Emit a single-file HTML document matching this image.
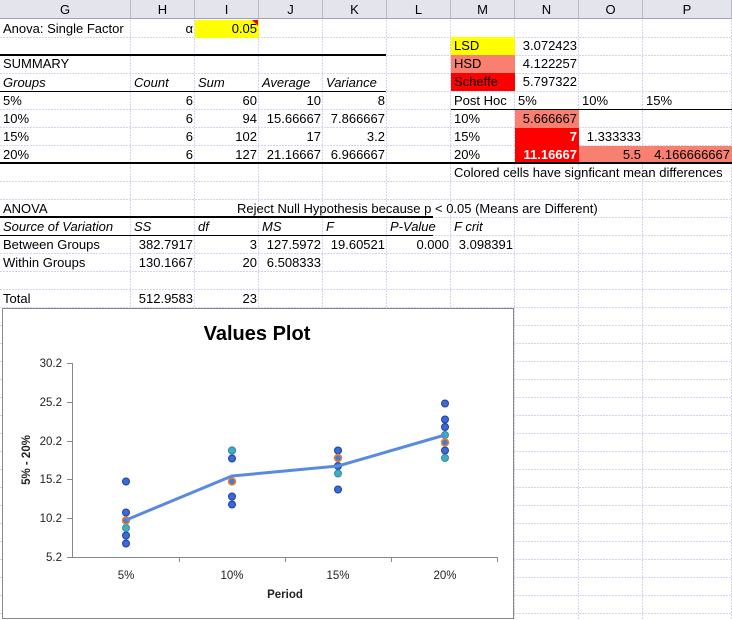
<!DOCTYPE html>
<html><head><meta charset="utf-8"><style>
body{margin:0;width:732px;height:620px;overflow:hidden;background:#fff;font-family:"Liberation Sans",Arial,sans-serif;font-size:13px;position:relative}
.h{position:absolute;top:0;height:19px;line-height:20px;text-align:center;font-size:13px;background:#e4e4ec;border-right:1px solid #b8b8cc;border-bottom:1px solid #a0a0b8;box-sizing:border-box}
.c{position:absolute;height:18px;line-height:18px;white-space:nowrap;padding:0 2px 0 3px;box-sizing:border-box}
.r{text-align:right}
.i{font-style:italic}
.ln{position:absolute;background:#000}
</style></head><body>
<svg style="position:absolute;left:0;top:0" width="732" height="620">
<g stroke="#d4d4ee" stroke-width="1" stroke-dasharray="2,1">
<line x1="130.5" y1="20" x2="130.5" y2="620"/><line x1="194.5" y1="20" x2="194.5" y2="620"/><line x1="258.5" y1="20" x2="258.5" y2="620"/><line x1="322.5" y1="20" x2="322.5" y2="620"/><line x1="386.5" y1="20" x2="386.5" y2="620"/><line x1="450.5" y1="20" x2="450.5" y2="620"/><line x1="514.5" y1="20" x2="514.5" y2="620"/><line x1="578.5" y1="20" x2="578.5" y2="620"/><line x1="642.5" y1="20" x2="642.5" y2="620"/><line x1="731.5" y1="20" x2="731.5" y2="620"/>
<line x1="0" y1="37.5" x2="732" y2="37.5"/><line x1="0" y1="55.5" x2="732" y2="55.5"/><line x1="0" y1="73.5" x2="732" y2="73.5"/><line x1="0" y1="91.5" x2="732" y2="91.5"/><line x1="0" y1="109.5" x2="732" y2="109.5"/><line x1="0" y1="127.5" x2="732" y2="127.5"/><line x1="0" y1="145.5" x2="732" y2="145.5"/><line x1="0" y1="163.5" x2="732" y2="163.5"/><line x1="0" y1="181.5" x2="732" y2="181.5"/><line x1="0" y1="199.5" x2="732" y2="199.5"/><line x1="0" y1="217.5" x2="732" y2="217.5"/><line x1="0" y1="235.5" x2="732" y2="235.5"/><line x1="0" y1="253.5" x2="732" y2="253.5"/><line x1="0" y1="271.5" x2="732" y2="271.5"/><line x1="0" y1="289.5" x2="732" y2="289.5"/><line x1="0" y1="307.5" x2="732" y2="307.5"/><line x1="0" y1="325.5" x2="732" y2="325.5"/><line x1="0" y1="343.5" x2="732" y2="343.5"/><line x1="0" y1="361.5" x2="732" y2="361.5"/><line x1="0" y1="379.5" x2="732" y2="379.5"/><line x1="0" y1="397.5" x2="732" y2="397.5"/><line x1="0" y1="415.5" x2="732" y2="415.5"/><line x1="0" y1="433.5" x2="732" y2="433.5"/><line x1="0" y1="451.5" x2="732" y2="451.5"/><line x1="0" y1="469.5" x2="732" y2="469.5"/><line x1="0" y1="487.5" x2="732" y2="487.5"/><line x1="0" y1="505.5" x2="732" y2="505.5"/><line x1="0" y1="523.5" x2="732" y2="523.5"/><line x1="0" y1="541.5" x2="732" y2="541.5"/><line x1="0" y1="559.5" x2="732" y2="559.5"/><line x1="0" y1="577.5" x2="732" y2="577.5"/><line x1="0" y1="595.5" x2="732" y2="595.5"/><line x1="0" y1="613.5" x2="732" y2="613.5"/>
</g></svg>
<div class="h" style="left:0;width:131px">G</div><div class="h" style="left:131px;width:64px">H</div><div class="h" style="left:195px;width:64px">I</div><div class="h" style="left:259px;width:64px">J</div><div class="h" style="left:323px;width:64px">K</div><div class="h" style="left:387px;width:64px">L</div><div class="h" style="left:451px;width:64px">M</div><div class="h" style="left:515px;width:64px">N</div><div class="h" style="left:579px;width:64px">O</div><div class="h" style="left:643px;width:89px">P</div>

<div class="c" style="left:0;top:20px">Anova: Single Factor</div>
<div class="c r" style="left:131px;top:20px;width:64px">α</div>
<div class="c r" style="left:195px;top:20px;width:64px;background:#ff0">0.05</div>
<div style="position:absolute;left:252px;top:20px;width:0;height:0;border-left:6px solid transparent;border-top:6px solid #e00"></div>

<div class="c" style="left:451px;top:37px;width:64px;background:#ff0">LSD</div><div class="c r" style="left:515px;top:37px;width:64px">3.072423</div>
<div class="c" style="left:451px;top:55px;width:64px;background:#f88070">HSD</div><div class="c r" style="left:515px;top:55px;width:64px">4.122257</div>
<div class="c" style="left:451px;top:73px;width:64px;background:#f00">Scheffe</div><div class="c r" style="left:515px;top:73px;width:64px">5.797322</div>

<div class="c" style="left:0;top:55px">SUMMARY</div>
<div class="c i" style="left:0;top:74px">Groups</div><div class="c i" style="left:131px;top:74px">Count</div><div class="c i" style="left:195px;top:74px">Sum</div><div class="c i" style="left:259px;top:74px">Average</div><div class="c i" style="left:323px;top:74px">Variance</div>
<div class="c" style="left:0;top:92px">5%</div><div class="c r" style="left:131px;top:92px;width:64px">6</div><div class="c r" style="left:195px;top:92px;width:64px">60</div><div class="c r" style="left:259px;top:92px;width:64px">10</div><div class="c r" style="left:323px;top:92px;width:64px">8</div>
<div class="c" style="left:0;top:110px">10%</div><div class="c r" style="left:131px;top:110px;width:64px">6</div><div class="c r" style="left:195px;top:110px;width:64px">94</div><div class="c r" style="left:259px;top:110px;width:64px">15.66667</div><div class="c r" style="left:323px;top:110px;width:64px">7.866667</div>
<div class="c" style="left:0;top:128px">15%</div><div class="c r" style="left:131px;top:128px;width:64px">6</div><div class="c r" style="left:195px;top:128px;width:64px">102</div><div class="c r" style="left:259px;top:128px;width:64px">17</div><div class="c r" style="left:323px;top:128px;width:64px">3.2</div>
<div class="c" style="left:0;top:146px">20%</div><div class="c r" style="left:131px;top:146px;width:64px">6</div><div class="c r" style="left:195px;top:146px;width:64px">127</div><div class="c r" style="left:259px;top:146px;width:64px">21.16667</div><div class="c r" style="left:323px;top:146px;width:64px">6.966667</div>

<div class="c" style="left:451px;top:92px">Post Hoc</div><div class="c" style="left:515px;top:92px">5%</div><div class="c" style="left:579px;top:92px">10%</div><div class="c" style="left:643px;top:92px">15%</div>
<div class="c" style="left:451px;top:110px">10%</div><div class="c r" style="left:515px;top:110px;width:64px;background:#f88070">5.666667</div>
<div class="c" style="left:451px;top:128px">15%</div><div class="c r" style="left:515px;top:128px;width:64px;background:#f00;color:#fff;font-weight:bold">7</div><div class="c r" style="left:579px;top:128px;width:64px">1.333333</div>
<div class="c" style="left:451px;top:146px">20%</div><div class="c r" style="left:515px;top:146px;width:64px;background:#f00;color:#fff;font-weight:bold">11.16667</div><div class="c r" style="left:579px;top:146px;width:64px;background:#f88070">5.5</div><div class="c r" style="left:643px;top:146px;width:89px;background:#f88070">4.166666667</div>
<div class="c" style="left:451px;top:164px">Colored cells have signficant mean differences</div>

<div class="ln" style="left:0;top:54px;width:386px;height:2px"></div>
<div class="ln" style="left:0;top:91px;width:386px;height:1px"></div>
<div class="ln" style="left:451px;top:109px;width:281px;height:1px"></div>
<div class="ln" style="left:0;top:162px;width:732px;height:2px"></div>

<div class="c" style="left:0;top:200px">ANOVA</div>
<div class="c" style="left:234px;top:200px">Reject Null Hypothesis because p &lt; 0.05 (Means are Different)</div>
<div class="c i" style="left:0;top:218px">Source of Variation</div><div class="c i" style="left:131px;top:218px">SS</div><div class="c i" style="left:195px;top:218px">df</div><div class="c i" style="left:259px;top:218px">MS</div><div class="c i" style="left:323px;top:218px">F</div><div class="c i" style="left:387px;top:218px">P-Value</div><div class="c i" style="left:451px;top:218px">F crit</div>
<div class="c" style="left:0;top:236px">Between Groups</div><div class="c r" style="left:131px;top:236px;width:64px">382.7917</div><div class="c r" style="left:195px;top:236px;width:64px">3</div><div class="c r" style="left:259px;top:236px;width:64px">127.5972</div><div class="c r" style="left:323px;top:236px;width:64px">19.60521</div><div class="c r" style="left:387px;top:236px;width:64px">0.000</div><div class="c r" style="left:451px;top:236px;width:64px">3.098391</div>
<div class="c" style="left:0;top:254px">Within Groups</div><div class="c r" style="left:131px;top:254px;width:64px">130.1667</div><div class="c r" style="left:195px;top:254px;width:64px">20</div><div class="c r" style="left:259px;top:254px;width:64px">6.508333</div>
<div class="c" style="left:0;top:290px">Total</div><div class="c r" style="left:131px;top:290px;width:64px">512.9583</div><div class="c r" style="left:195px;top:290px;width:64px">23</div>
<div class="ln" style="left:0;top:216px;width:433px;height:2px"></div>
<div class="ln" style="left:0;top:235px;width:433px;height:1px"></div>

<svg style="position:absolute;left:2px;top:308px" width="512" height="311" viewBox="2 308 512 311">
<rect x="2.5" y="308.5" width="511" height="310" fill="#fff" stroke="#888"/>
<text x="257" y="340" font-family="Liberation Sans, sans-serif" font-size="20" font-weight="bold" text-anchor="middle">Values Plot</text>
<g stroke="#888" stroke-width="1">
<line x1="72.5" y1="363" x2="72.5" y2="558"/><line x1="72" y1="557.5" x2="498" y2="557.5"/>
<line x1="67" y1="363.5" x2="72" y2="363.5"/><line x1="67" y1="402.5" x2="72" y2="402.5"/><line x1="67" y1="441.5" x2="72" y2="441.5"/><line x1="67" y1="479.5" x2="72" y2="479.5"/><line x1="67" y1="518.5" x2="72" y2="518.5"/><line x1="67" y1="557.5" x2="72" y2="557.5"/>
<line x1="179.5" y1="557" x2="179.5" y2="562"/><line x1="285.5" y1="557" x2="285.5" y2="562"/><line x1="391.5" y1="557" x2="391.5" y2="562"/><line x1="497.5" y1="557" x2="497.5" y2="562"/>
</g>
<g font-family="Liberation Sans, sans-serif" font-size="11.5" text-anchor="end" fill="#222">
<text x="62" y="367">30.2</text><text x="62" y="406">25.2</text><text x="62" y="445">20.2</text><text x="62" y="483">15.2</text><text x="62" y="522">10.2</text><text x="62" y="561">5.2</text>
</g>
<g font-family="Liberation Sans, sans-serif" font-size="11.5" text-anchor="middle" fill="#222">
<text x="126" y="579">5%</text><text x="232" y="579">10%</text><text x="338" y="579">15%</text><text x="445" y="579">20%</text>
<text x="285" y="598" font-weight="bold">Period</text>
<text transform="translate(30,460) rotate(-90)" font-weight="bold">5% - 20%</text>
</g>
<g stroke="#1f3fa0" stroke-width="1" fill="#3a6ad8">
<circle cx="126" cy="481.5" r="3.5"/><circle cx="126" cy="512.5" r="3.5"/><circle cx="126" cy="535.5" r="3.5"/><circle cx="126" cy="543.5" r="3.5"/>
<circle cx="232" cy="450.5" r="3.5"/><circle cx="232" cy="458.5" r="3.5"/><circle cx="232" cy="496.5" r="3.5"/><circle cx="232" cy="504.5" r="3.5"/>
<circle cx="338" cy="450.5" r="3.5"/><circle cx="338" cy="466" r="3.5"/><circle cx="338" cy="489.5" r="3.5"/>
<circle cx="445" cy="403.5" r="3.5"/><circle cx="445" cy="419.5" r="3.5"/><circle cx="445" cy="427" r="3.5"/><circle cx="445" cy="450.5" r="3.5"/>
</g>
<g fill="#3cb0c0" stroke="#3a8aa0"><circle cx="126" cy="528" r="3.5"/><circle cx="232" cy="450.5" r="3.5"/><circle cx="338" cy="473.5" r="3.5"/><circle cx="445" cy="435" r="3.5"/><circle cx="445" cy="458" r="3.5"/></g>
<g fill="#4a7ad8" stroke="#f08020" stroke-width="1.5"><circle cx="126" cy="520.5" r="3.5"/><circle cx="232" cy="481.5" r="3.5"/><circle cx="338" cy="458" r="3.5"/><circle cx="445" cy="442.5" r="3.5"/></g>
<polyline points="126,520 232,476 338,466 445,435" fill="none" stroke="#5a8ae0" stroke-width="3"/>
</svg>
</body></html>
